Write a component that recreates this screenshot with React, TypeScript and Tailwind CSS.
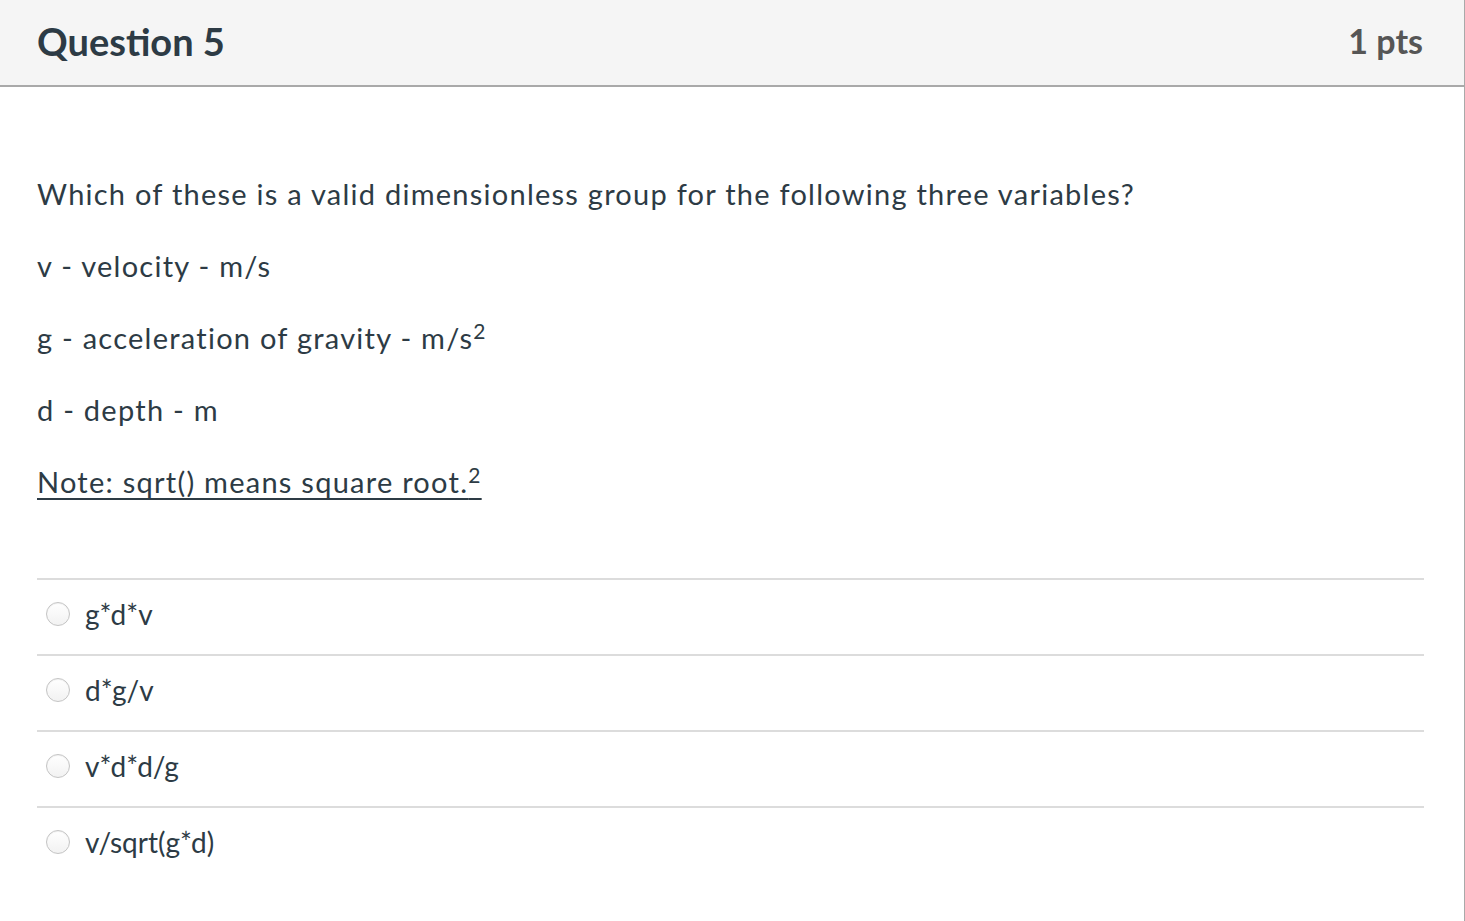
import React from "react";

const answers = ["g*d*v", "d*g/v", "v*d*d/g", "v/sqrt(g*d)"];

export default function App() {
  return (
    <div
      className="w-[1465px] h-[921px] bg-white overflow-hidden text-[#2d3b45]"
      style={{ fontFamily: "Lato, 'Noto Sans', sans-serif" }}
    >
      <div className="w-[1465px] h-[921px] border-r border-[#a9a9a9] flex flex-col">
        <div className="h-[87px] bg-[#f5f5f5] border-b-[2px] border-[#a9a9a9] flex items-center justify-between pl-[37px] pr-[41px] pb-[4px] shrink-0">
          <h2 className="text-[38px] font-bold leading-none">Question 5</h2>
          <div className="text-[34px] font-bold text-[#565656] leading-none">1 pts</div>
        </div>
        <div className="pl-[37px] pr-[40px] pt-[87px]">
          <div className="text-[29px] leading-[40px] tracking-[1.25px] flex flex-col gap-[32px]">
            <p>Which of these is a valid dimensionless group for the following three variables?</p>
            <p>v - velocity - m/s</p>
            <p>
              g - acceleration of gravity - m/s<sup className="text-[21px] leading-none">2</sup>
            </p>
            <p>d - depth - m</p>
            <p>
              <span className="underline decoration-[2px] underline-offset-[5px]">
                Note: sqrt() means square root.<sup className="text-[21px] leading-none">2</sup>
              </span>
            </p>
          </div>
          <div className="mt-[76px]">
            {answers.map((a) => (
              <div
                key={a}
                className="h-[76px] border-t-[2px] border-[#dcdcdc] flex items-center pb-[7px]"
              >
                <span className="ml-[9px] w-[24px] h-[24px] rounded-full border border-[#c4c4c4] bg-gradient-to-b from-white to-[#f2f2f2] shadow-[inset_0_1px_1px_rgba(0,0,0,0.06)] shrink-0" />
                <span className="ml-[15px] text-[28px] leading-[40px]">{a}</span>
              </div>
            ))}
          </div>
        </div>
      </div>
    </div>
  );
}
